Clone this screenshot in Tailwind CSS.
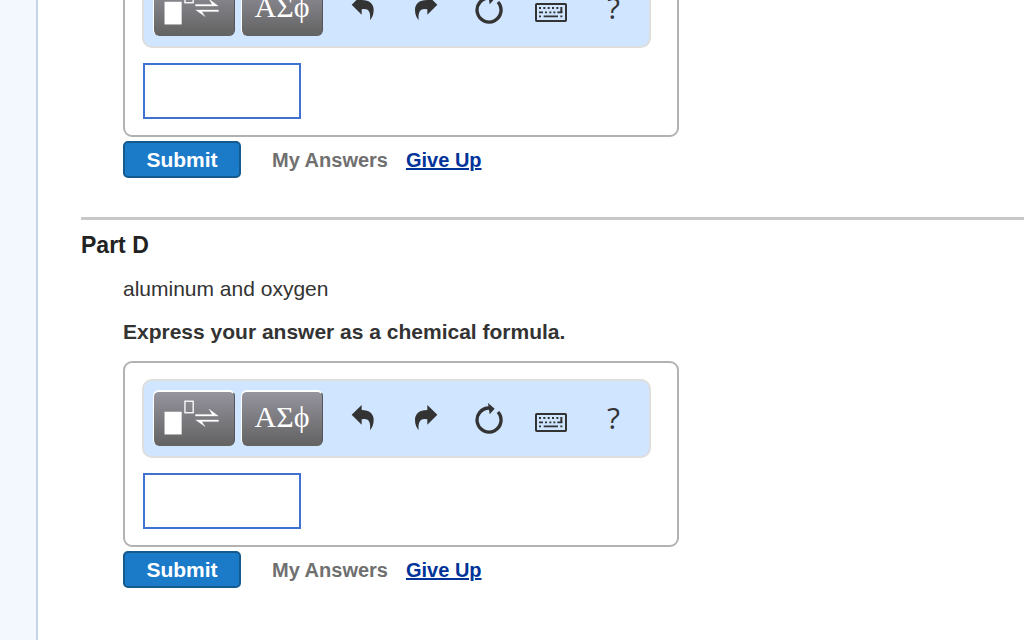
<!DOCTYPE html>
<html lang="en">
<head>
<meta charset="utf-8">
<title>Part D</title>
<script src="https://cdn.jsdelivr.net/npm/@tailwindcss/browser@4"></script>
</head>
<body class="h-screen overflow-hidden bg-white font-['Liberation_Sans',Arial,sans-serif] text-[#333]">
<svg class="hidden" aria-hidden="true">
  <symbol id="template" viewBox="102 105 243 168">
    <rect x="134" y="170" width="52" height="69" fill="#fff"/>
    <rect x="196" y="138" width="25" height="35" fill="none" stroke="#fff" stroke-width="4"/>
    <path d="M228 178H279L269 162L297 183H228ZM298 200H247L257 215L229 195H298Z" fill="#fff" stroke="#fff" stroke-width="1"/>
  </symbol>
  <symbol id="undo" viewBox="48 81 99 96">
    <path d="M65 119L95 90V105C119 105 131 117 131 135C131 149 126 158 120 166C122 146 119 132 103 132L95 133V149Z" fill="#333"/>
  </symbol>
  <symbol id="redo" viewBox="237 81 99 96">
    <path d="M322 119L292 90V105C267 105 255 117 255 135C255 149 260 158 266 166C264 146 268 132 284 132L292 133V149Z" fill="#333"/>
  </symbol>
  <symbol id="reset" viewBox="426 81 99 96">
    <path d="M504 111A36 36 0 1 1 478 99" fill="none" stroke="#333" stroke-width="10"/>
    <path d="M474 84L494 101L479 118Z" fill="#333"/>
  </symbol>
  <symbol id="keyboard" viewBox="105 141 99 96">
    <rect x="108" y="177" width="90" height="51" rx="2" fill="none" stroke="#333" stroke-width="6"/>
    <path d="M117 189H178" stroke="#333" stroke-width="6" stroke-dasharray="6 7"/>
    <path d="M117 202H129M135 202H141M148 202H154M160 202H166M172 202H187M117 214H123M131 214H174M181 214H187" stroke="#333" stroke-width="5"/>
    <path d="M184 186V204" stroke="#333" stroke-width="6"/>
  </symbol>
</svg>
<div class="flex h-full">
  <aside class="w-[38px] shrink-0 border-r-2 border-[#c5d3e4] bg-[#f3f8ff]"></aside>
  <main class="-mt-[49px] min-w-0 flex-1 pl-[43px]">
    <section class="pl-[42px]">
      <div class="w-[556px] max-w-full rounded-[9px] border-2 border-[#b2b2b2] pt-4 pr-[26px] pb-4 pl-[17px]">
        <div role="toolbar" aria-label="Formula tools" class="flex rounded-[10px] border-2 border-[#dedede] bg-[#d0e5ff] pt-[9px] pb-[10px] pl-[9px]">
          <button aria-label="Templates" class="h-14 w-[82px] shrink-0 rounded-md border-t-2 border-r border-l border-t-white border-r-[#55555a] border-l-white bg-linear-to-b from-[#96949e] to-[#626262]"><svg class="-mt-0.5 h-14 w-[80px]"><use href="#template"/></svg></button>
          <button aria-label="Symbols" class="ml-1.5 h-14 w-[82px] shrink-0 rounded-md border-t-2 border-r border-l border-t-white border-r-[#55555a] border-l-white bg-linear-to-b from-[#96949e] to-[#626262] pb-1 font-['Liberation_Serif',serif] text-[30px] leading-8 text-white">ΑΣϕ</button>
          <div class="ml-2 flex">
            <button aria-label="Undo" class="flex w-[63px] items-center justify-center"><svg class="h-8 w-[33px]"><use href="#undo"/></svg></button>
            <button aria-label="Redo" class="flex w-[63px] items-center justify-center"><svg class="h-8 w-[33px]"><use href="#redo"/></svg></button>
            <button aria-label="Reset" class="flex w-[63px] items-center justify-center"><svg class="h-8 w-[33px]"><use href="#reset"/></svg></button>
            <button aria-label="Keyboard" class="flex w-[63px] items-center justify-center"><svg class="h-8 w-[33px]"><use href="#keyboard"/></svg></button>
            <button aria-label="Help" class="w-[61px] text-center font-['Open_Sans',sans-serif] text-[30px] leading-8">?</button>
          </div>
        </div>
        <input type="text" aria-label="Part C answer" class="mt-[15px] ml-px block h-14 w-[158px] border-2 border-[#3f72d0] bg-white px-2 text-[21px]">
      </div>
      <div class="mt-1 flex items-center">
        <button class="h-[37px] w-[118px] rounded-[5px] border-2 border-[#155a8e] bg-[#1c7bc9] text-[21px] leading-7 font-bold text-white">Submit</button>
        <span class="ml-[31px] text-[20px] leading-7 font-bold text-[#707070]">My Answers</span>
        <a href="#" class="ml-[18px] text-[20px] leading-7 font-bold text-[#003399] underline">Give Up</a>
      </div>
    </section>
    <hr class="mt-[39px] border-t-3 border-[#c8c8c8]">
    <h2 class="mt-[11px] text-[23px] leading-7 font-bold text-[#222]">Part D</h2>
    <section class="pl-[42px]">
      <p class="mt-4 text-[21px] leading-7">aluminum and oxygen</p>
      <p class="mt-[15px] text-[21px] leading-7 font-bold">Express your answer as a chemical formula.</p>
      <div class="mt-[15px] w-[556px] max-w-full rounded-[9px] border-2 border-[#b2b2b2] pt-4 pr-[26px] pb-4 pl-[17px]">
        <div role="toolbar" aria-label="Formula tools" class="flex rounded-[10px] border-2 border-[#dedede] bg-[#d0e5ff] pt-[9px] pb-[10px] pl-[9px]">
          <button aria-label="Templates" class="h-14 w-[82px] shrink-0 rounded-md border-t-2 border-r border-l border-t-white border-r-[#55555a] border-l-white bg-linear-to-b from-[#96949e] to-[#626262]"><svg class="-mt-0.5 h-14 w-[80px]"><use href="#template"/></svg></button>
          <button aria-label="Symbols" class="ml-1.5 h-14 w-[82px] shrink-0 rounded-md border-t-2 border-r border-l border-t-white border-r-[#55555a] border-l-white bg-linear-to-b from-[#96949e] to-[#626262] pb-1 font-['Liberation_Serif',serif] text-[30px] leading-8 text-white">ΑΣϕ</button>
          <div class="ml-2 flex">
            <button aria-label="Undo" class="flex w-[63px] items-center justify-center"><svg class="h-8 w-[33px]"><use href="#undo"/></svg></button>
            <button aria-label="Redo" class="flex w-[63px] items-center justify-center"><svg class="h-8 w-[33px]"><use href="#redo"/></svg></button>
            <button aria-label="Reset" class="flex w-[63px] items-center justify-center"><svg class="h-8 w-[33px]"><use href="#reset"/></svg></button>
            <button aria-label="Keyboard" class="flex w-[63px] items-center justify-center"><svg class="h-8 w-[33px]"><use href="#keyboard"/></svg></button>
            <button aria-label="Help" class="w-[61px] text-center font-['Open_Sans',sans-serif] text-[30px] leading-8">?</button>
          </div>
        </div>
        <input type="text" aria-label="Part D answer" class="mt-[15px] ml-px block h-14 w-[158px] border-2 border-[#3f72d0] bg-white px-2 text-[21px]">
      </div>
      <div class="mt-1 flex items-center">
        <button class="h-[37px] w-[118px] rounded-[5px] border-2 border-[#155a8e] bg-[#1c7bc9] text-[21px] leading-7 font-bold text-white">Submit</button>
        <span class="ml-[31px] text-[20px] leading-7 font-bold text-[#707070]">My Answers</span>
        <a href="#" class="ml-[18px] text-[20px] leading-7 font-bold text-[#003399] underline">Give Up</a>
      </div>
    </section>
  </main>
</div>
</body>
</html>
